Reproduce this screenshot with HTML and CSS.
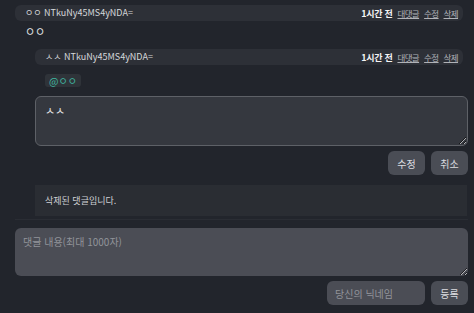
FILE: index.html
```html
<!DOCTYPE html>
<html lang="ko">
<head>
    <meta charset="UTF-8">
    <meta name="viewport" content="width=device-width, initial-scale=1.0">
    <title>댓글</title>
    <link rel="stylesheet" href="styles.css">
</head>
<body>

    <!-- COMMENT LIST -->
    <div class="comment-list">
        <div class="comment">
            <div class="comment-head">
                <span class="author">ㅇㅇ NTkuNy45MS4yNDA=</span>
                <span class="meta">
                    <b>1시간 전</b>
                    <a href="#">대댓글</a>
                    <a href="#">수정</a>
                    <a href="#">삭제</a>
                </span>
            </div>
            <div class="comment-body">ㅇㅇ</div>

            <div class="reply">
                <div class="comment-head">
                    <span class="author">ㅅㅅ NTkuNy45MS4yNDA=</span>
                    <span class="meta">
                        <b>1시간 전</b>
                        <a href="#">대댓글</a>
                        <a href="#">수정</a>
                        <a href="#">삭제</a>
                    </span>
                </div>
                <div class="mention-row"><span class="mention">@ㅇㅇ</span></div>

                <!-- edit form -->
                <textarea class="edit-box">ㅅㅅ</textarea>
                <div class="btn-row">
                    <button class="btn">수정</button>
                    <button class="btn">취소</button>
                </div>

                <div class="deleted">삭제된 댓글입니다.</div>
            </div>
        </div>
    </div>

    <!-- WRITE FORM -->
    <div class="write-form">
        <textarea class="write-box" placeholder="댓글 내용(최대 1000자)"></textarea>
        <div class="btn-row">
            <input type="text" class="nick" placeholder="당신의 닉네임">
            <button class="btn">등록</button>
        </div>
    </div>

</body>
</html>
```

FILE: styles.css
```css
body {
    font-family: "Noto Sans CJK KR", "Noto Sans", sans-serif;
    margin: 0;
    background-color: #22252c;
    color: #e4e5e7;
    font-size: 9px;
    padding: 5px 6px 0 15px;
}
.comment-list {
    padding-bottom: 3px;
    border-bottom: 1px solid #2a2d34;
}
.comment-head {
    display: flex;
    justify-content: space-between;
    align-items: center;
    height: 16px;
    margin-right: 5px;
    padding: 0 5px 0 10px;
    background-color: #2d3037;
    border-radius: 6px;
    line-height: 16px;
}
.author {
    color: #d6d8db;
}
.meta {
    display: flex;
    align-items: baseline;
    gap: 5px;
}
.meta b {
    color: #f4f4f5;
    font-weight: bold;
    letter-spacing: -0.3px;
}
.meta a {
    color: #b0b2b7;
    text-decoration: underline;
    font-size: 8.5px;
    letter-spacing: -0.6px;
}
.comment-body {
    padding: 5px 10px 12px;
    font-size: 11px;
    line-height: 11px;
}
.reply {
    padding-left: 20px;
}
.mention-row {
    padding: 9px 10px 8px;
}
.mention {
    display: inline-block;
    background-color: #2f3339;
    color: #3fb9a2;
    padding: 0 4px;
    border-radius: 3px;
    line-height: 13px;
    font-size: 10px;
}
.edit-box, .write-box {
    display: block;
    width: 100%;
    box-sizing: border-box;
    font-family: inherit;
    color: #e8e9ea;
    border-radius: 6px;
    margin: 0;
}
.edit-box {
    height: 50px;
    background-color: #35383f;
    border: 1px solid #5e6167;
    padding: 5px 9px;
    font-size: 11px;
}
.btn-row {
    display: flex;
    justify-content: flex-end;
    gap: 6px;
    margin-top: 5px;
}
.btn {
    background-color: #4a4d55;
    color: #dcdde0;
    border: none;
    border-radius: 6px;
    width: 37px;
    height: 24px;
    font-family: inherit;
    font-size: 10px;
    padding: 0;
}
.deleted {
    margin-top: 10px;
    margin-right: 1px;
    height: 31px;
    line-height: 31px;
    background-color: #2a2d33;
    padding-left: 10px;
    color: #cfd0d3;
}
.write-form {
    padding-top: 8px;
}
.write-box {
    height: 48px;
    background-color: #4b4d55;
    border: none;
    padding: 6px 8px;
    font-size: 10px;
}
.write-box::placeholder, .nick::placeholder {
    color: #92949a;
}
.nick {
    width: 98px;
    height: 24px;
    box-sizing: border-box;
    background-color: #4b4d55;
    border: none;
    border-radius: 6px;
    padding: 0 8px;
    font-family: inherit;
    font-size: 10px;
    color: #e8e9ea;
}
```
